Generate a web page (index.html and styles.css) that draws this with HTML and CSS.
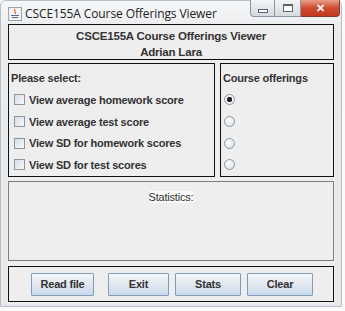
FILE: index.html
```html
<!DOCTYPE html>
<html lang="en">
<head>
    <meta charset="UTF-8">
    <meta name="viewport" content="width=device-width, initial-scale=1.0">
    <title>CSCE155A Course Offerings Viewer</title>
    <link rel="stylesheet" href="styles.css">
</head>
<body>
    <div class="window">
        <div class="titlebar">
            <svg class="app-icon" width="14" height="14" viewBox="0 0 14 14">
                <rect x="0.5" y="0.5" width="13" height="13" fill="#f4f4f4" stroke="#9aa4ae"/>
                <path d="M7 2 C5 4 9 5 7 7" stroke="#e06a1a" fill="none" stroke-width="1.2"/>
                <path d="M3 8.5 h8 M4 10.5 h6" stroke="#4a6fa0" stroke-width="1.2"/>
            </svg>
            <span class="title-text">CSCE155A Course Offerings Viewer</span>
            <div class="controls">
                <div class="ctl ctl-min"><span class="min-bar"></span></div>
                <div class="ctl ctl-max"><span class="max-box"></span></div>
                <div class="ctl ctl-close">&#x2715;</div>
            </div>
        </div>
        <div class="content">
            <div class="header box">
                <div>CSCE155A Course Offerings Viewer</div>
                <div>Adrian Lara</div>
            </div>
            <div class="row">
                <div class="select box">
                    <div class="label">Please select:</div>
                    <div class="check-row"><span class="checkbox"></span><span class="focus">View average homework score</span></div>
                    <div class="check-row"><span class="checkbox"></span><span>View average test score</span></div>
                    <div class="check-row"><span class="checkbox"></span><span>View SD for homework scores</span></div>
                    <div class="check-row"><span class="checkbox"></span><span>View SD for test scores</span></div>
                </div>
                <div class="offerings box">
                    <div class="label">Course offerings</div>
                    <div class="radio-row"><span class="radio checked"></span></div>
                    <div class="radio-row"><span class="radio"></span></div>
                    <div class="radio-row"><span class="radio"></span></div>
                    <div class="radio-row"><span class="radio"></span></div>
                </div>
            </div>
            <div class="stats">
                <span class="stats-label">Statistics:</span>
            </div>
            <div class="buttons box">
                <button class="btn btn-read">Read file</button>
                <button class="btn btn-exit">Exit</button>
                <button class="btn btn-stats">Stats</button>
                <button class="btn btn-clear">Clear</button>
            </div>
        </div>
    </div>
</body>
</html>
```

FILE: styles.css
```css
* {
    box-sizing: border-box;
}
body {
    margin: 0;
    background-color: #fafafa;
    font-family: "Liberation Sans", Arial, sans-serif;
    font-size: 11px;
    letter-spacing: -0.2px;
    color: #333;
}
.window {
    width: 342px;
    height: 307px;
    background: linear-gradient(to bottom, #f6f7f8, #e9ecef 30px, #e6e9ec);
    border: 1px solid #b8bec5;
    border-radius: 6px 6px 0 0;
    padding: 0 6px 4px 6px;
    display: flex;
    flex-direction: column;
}
.titlebar {
    height: 26px;
    display: flex;
    align-items: flex-start;
    position: relative;
}
.app-icon {
    margin: 6px 0 0 1px;
}
.title-text {
    font-family: "Open Sans", "Noto Sans", sans-serif;
    font-size: 12px;
    letter-spacing: -0.1px;
    color: #222;
    margin: 4px 0 0 3px;
}
.controls {
    position: absolute;
    right: -5px;
    top: -1px;
    display: flex;
}
.ctl {
    height: 17px;
    border: 1px solid #8d96a0;
    border-top: none;
    display: flex;
    align-items: center;
    justify-content: center;
}
.ctl-min {
    width: 25px;
    border-radius: 0 0 0 4px;
    background: linear-gradient(to bottom, #f3f4f5, #d6dadf);
}
.ctl-max {
    width: 26px;
    border-left: none;
    background: linear-gradient(to bottom, #f3f4f5, #d6dadf);
}
.ctl-close {
    width: 39px;
    border-left: none;
    border-color: #8a3a2c;
    border-radius: 0 0 4px 0;
    background: linear-gradient(to bottom, #e8a08c, #cf4b30 50%, #c2391f);
    color: #fff;
    font-size: 11px;
    font-weight: bold;
}
.min-bar {
    width: 10px;
    height: 4px;
    border: 1px solid #5a6470;
    background: #fff;
    margin-top: 5px;
}
.max-box {
    width: 10px;
    height: 8px;
    border: 1px solid #5a6470;
    border-top-width: 2px;
    background: #fff;
}
.content {
    flex: 1;
    background-color: #eeeeee;
    padding: 2px 1px 2px 1px;
    display: flex;
    flex-direction: column;
    gap: 3px;
}
.box {
    border: 1px solid #111;
}
.header {
    height: 36px;
    text-align: center;
    font-weight: bold;
    font-size: 11.5px;
    line-height: 16px;
    padding-top: 3px;
}
.row {
    display: flex;
    gap: 5px;
    height: 114px;
}
.select {
    width: 207px;
    padding: 6px 0 0 2px;
}
.offerings {
    flex: 1;
    padding: 6px 0 0 2px;
}
.label {
    font-weight: bold;
    height: 16px;
    line-height: 16px;
    margin-bottom: 3px;
}
.check-row {
    display: flex;
    align-items: center;
    height: 21.7px;
    font-weight: bold;
}
.checkbox {
    width: 11px;
    height: 11px;
    margin: 0 2px 0 3px;
    border: 1px solid #8c96a2;
    background: linear-gradient(135deg, #d6dde6, #f7f9fb);
}
.check-row span:last-child {
    padding: 1px 1px;
    border: 1px solid transparent;
}
.check-row .focus {
    border-color: #c8c8c8;
}
.radio-row {
    display: flex;
    align-items: center;
    height: 21.7px;
}
.radio {
    width: 11px;
    height: 11px;
    margin-left: 1px;
    border-radius: 50%;
    border: 1px solid #8c96a2;
    background: radial-gradient(circle at 40% 35%, #ffffff, #dde3ea 80%);
}
.radio.checked {
    background: radial-gradient(circle, #1a1a1a 0, #2b2b2b 2.5px, #f2f4f6 3px);
}
.stats {
    height: 80px;
    border: 1px solid #7d7d7d;
    text-align: center;
    padding-top: 9px;
    margin-top: 1px;
}
.stats-label {
    background-color: #fafafa;
    color: #333;
}
.buttons {
    height: 36px;
    margin-top: 2px;
    display: flex;
    align-items: center;
    padding-left: 22px;
    gap: 6px;
}
.btn {
    height: 23px;
    font-family: "Liberation Sans", Arial, sans-serif;
    font-size: 11px;
    letter-spacing: -0.2px;
    font-weight: bold;
    color: #333;
    border: 1px solid #7f9db9;
    border-radius: 1px;
    background: linear-gradient(to bottom, #f4f6f8, #e3e9f0 45%, #c9d9ea);
    padding: 0;
}
.btn-read {
    width: 63px;
    margin-right: 8px;
}
.btn-exit {
    width: 61px;
}
.btn-stats {
    width: 66px;
}
.btn-clear {
    width: 66px;
}
```
